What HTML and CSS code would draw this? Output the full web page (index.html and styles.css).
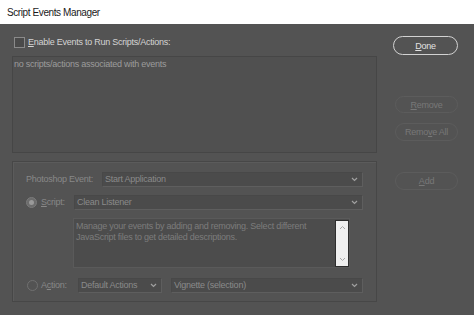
FILE: index.html
```html
<!DOCTYPE html>
<html>
<head>
<meta charset="utf-8">
<title>Script Events Manager</title>
<link rel="stylesheet" href="styles.css">
</head>
<body>
<div class="titlebar">Script Events Manager</div>
<div class="content">
  <div class="left">
    <div class="enable">
      <span class="checkbox"></span>
      <span><u>E</u>nable Events to Run Scripts/Actions:</span>
    </div>
    <div class="list">no scripts/actions associated with events</div>
    <div class="group">
      <div class="row">
        <span class="label label-event">Photoshop Event:</span>
        <div class="select sel-event"><span>Start Application</span><svg class="chev" width="7" height="5" viewBox="0 0 7 5"><polyline points="1,1 3.5,3.5 6,1" fill="none" stroke="#a0a0a0" stroke-width="1.2"/></svg></div>
      </div>
      <div class="row row-script">
        <span class="radio checked"><span class="dot"></span></span>
        <span class="label label-script"><u>S</u>cript:</span>
        <div class="select sel-script"><span>Clean Listener</span><svg class="chev" width="7" height="5" viewBox="0 0 7 5"><polyline points="1,1 3.5,3.5 6,1" fill="none" stroke="#a0a0a0" stroke-width="1.2"/></svg></div>
      </div>
      <div class="desc">
        <div class="desc-text">Manage your events by adding and removing. Select different JavaScript files to get detailed descriptions.</div>
        <div class="scrollbar">
          <svg width="7" height="5" viewBox="0 0 7 5"><polyline points="1,4 3.5,1.5 6,4" fill="none" stroke="#a8a8a8" stroke-width="1"/></svg>
          <svg width="7" height="5" viewBox="0 0 7 5"><polyline points="1,1 3.5,3.5 6,1" fill="none" stroke="#a8a8a8" stroke-width="1"/></svg>
        </div>
      </div>
      <div class="row row-action">
        <span class="radio"></span>
        <span class="label label-action">A<u>c</u>tion:</span>
        <div class="select sel-set"><span>Default Actions</span><svg class="chev" width="7" height="5" viewBox="0 0 7 5"><polyline points="1,1 3.5,3.5 6,1" fill="none" stroke="#a0a0a0" stroke-width="1.2"/></svg></div>
        <div class="select sel-act"><span>Vignette (selection)</span><svg class="chev" width="7" height="5" viewBox="0 0 7 5"><polyline points="1,1 3.5,3.5 6,1" fill="none" stroke="#a0a0a0" stroke-width="1.2"/></svg></div>
      </div>
    </div>
  </div>
  <div class="right">
    <div class="btn done"><u>D</u>one</div>
    <div class="btn off remove"><u>R</u>emove</div>
    <div class="btn off removeall">Remo<u>v</u>e All</div>
    <div class="btn off add"><u>A</u>dd</div>
  </div>
</div>
</body>
</html>
```
FILE: styles.css
```css
html, body {
  margin: 0;
  padding: 0;
}
body {
  width: 474px;
  height: 315px;
  overflow: hidden;
  background: #535353;
  font-family: "Liberation Sans", Arial, sans-serif;
  font-size: 9px;
  letter-spacing: -0.25px;
}
u {
  text-decoration-thickness: 1px;
  text-underline-offset: 1px;
}
.titlebar {
  height: 24px;
  background: #ffffff;
  color: #1a1a1a;
  font-size: 10px;
  letter-spacing: -0.4px;
  display: flex;
  align-items: center;
  padding-left: 7px;
  box-sizing: border-box;
}
.content {
  display: flex;
  height: 291px;
}
.left {
  width: 365px;
  margin-left: 12px;
  display: flex;
  flex-direction: column;
}
.enable {
  display: flex;
  align-items: center;
  height: 14px;
  margin-top: 11px;
  padding-left: 2px;
  gap: 3px;
  color: #d4d4d4;
}
.checkbox {
  width: 9px;
  height: 9px;
  border: 1px solid #8a8a8a;
  background: #4a4a4a;
}
.list {
  margin-top: 7px;
  height: 97px;
  box-sizing: border-box;
  border: 1px solid #464646;
  background: #505050;
  color: #9c9c9c;
  padding: 2px 1px;
  line-height: 11px;
}
.group {
  margin-top: 8px;
  height: 141px;
  box-sizing: border-box;
  border: 1px solid #474747;
  box-shadow: inset 1px 1px 0 #5b5b5b;
  padding: 10px 0 0 13px;
  display: flex;
  flex-direction: column;
}
.row {
  display: flex;
  align-items: center;
  height: 14px;
}
.label {
  color: #888888;
  white-space: nowrap;
}
.label-event {
  width: 76px;
}
.label-script {
  width: 33px;
  margin-left: 4px;
}
.label-action {
  width: 37px;
  margin-left: 4px;
}
.select {
  height: 15px;
  box-sizing: border-box;
  background: #4b4b4b;
  border: 1px solid #484848;
  border-bottom-color: #5e5e5e;
  border-right-color: #5e5e5e;
  color: #8a8a8a;
  display: flex;
  align-items: center;
  justify-content: space-between;
  padding: 0 4px 0 2px;
  white-space: nowrap;
}
.sel-event {
  width: 261px;
}
.sel-script {
  width: 289px;
}
.sel-set {
  width: 84px;
}
.sel-act {
  width: 192px;
  margin-left: 9px;
}
.row-script {
  margin-top: 9px;
}
.radio {
  width: 9px;
  height: 9px;
  border-radius: 50%;
  border: 1px solid #707070;
  display: flex;
  align-items: center;
  justify-content: center;
}
.radio.checked {
  background: #6c6c6c;
  border-color: #7a7a7a;
}
.radio .dot {
  width: 5px;
  height: 5px;
  border-radius: 50%;
  background: #9a9a9a;
}
.desc {
  margin-top: 9px;
  margin-left: 47px;
  width: 277px;
  height: 50px;
  box-sizing: border-box;
  border: 1px solid #5a5a5a;
  background: #4c4c4c;
  display: flex;
  justify-content: space-between;
}
.desc-text {
  color: #7c7c7c;
  line-height: 11px;
  padding: 2px 2px;
  width: 255px;
}
.scrollbar {
  width: 14px;
  height: 47px;
  margin-top: 1px;
  box-sizing: border-box;
  background: #f0f0f0;
  border: 1px solid #2e2e2e;
  display: flex;
  flex-direction: column;
  justify-content: space-between;
  align-items: center;
  padding: 4px 0;
}
.row-action {
  margin-top: 10px;
}
.row-action .radio {
  margin-left: 1px;
}
.row-action .label-action {
  margin-left: 3px;
}
.right {
  flex: 1;
  display: flex;
  flex-direction: column;
  align-items: flex-end;
  padding-right: 16px;
}
.btn {
  box-sizing: border-box;
  display: flex;
  align-items: center;
  justify-content: center;
  border-radius: 10px;
}
.done {
  margin-top: 12px;
  width: 65px;
  height: 19px;
  border: 1.5px solid #d2d2d2;
  color: #e2e2e2;
}
.off {
  width: 63px;
  border: 1px solid #5c5c5c;
  color: #787878;
}
.remove {
  margin-top: 41px;
  height: 17px;
}
.removeall {
  margin-top: 10px;
  height: 18px;
}
.add {
  margin-top: 31px;
  height: 18px;
}
```
